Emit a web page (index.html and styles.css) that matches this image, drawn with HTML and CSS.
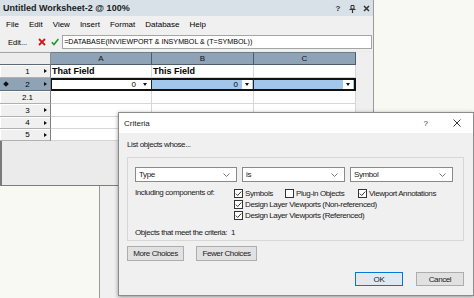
FILE: index.html
```html
<!DOCTYPE html>
<html>
<head>
<meta charset="utf-8">
<link rel="stylesheet" href="styles.css">
</head>
<body>
<div class="top">
  <div class="ws">
    <div class="ws-title">
      <span class="ws-name">Untitled Worksheet-2 @ 100%</span>
      <div class="ws-ctrls">
        <span class="ctl q">?</span>
        <span class="ctl"><svg width="7" height="9" viewBox="0 0 7 9"><path d="M2 1.5h3v3.5h-3z" fill="none" stroke="#333" stroke-width="1"/><path d="M0.5 5.5h6M3.5 5.5v3.5" stroke="#333" stroke-width="1.2"/></svg></span>
        <span class="ctl"><svg width="7" height="7" viewBox="0 0 7 7"><path d="M1 1L6 6M6 1L1 6" stroke="#333" stroke-width="1.5"/></svg></span>
      </div>
    </div>
    <div class="menubar">
      <span>File</span><span>Edit</span><span>View</span><span>Insert</span><span>Format</span><span>Database</span><span>Help</span>
    </div>
    <div class="fbar">
      <span class="edit">Edit...</span>
      <svg class="fx-cancel" width="8" height="8" viewBox="0 0 8 8"><path d="M1 1L7 7M7 1L1 7" stroke="#d01818" stroke-width="1.8"/></svg>
      <svg class="fx-ok" width="8" height="8" viewBox="0 0 8 8"><path d="M0.8 4.2L3 6.6L7.4 1" fill="none" stroke="#1f9a2c" stroke-width="1.6"/></svg>
      <div class="finput">=DATABASE(INVIEWPORT &amp; INSYMBOL &amp; (T=SYMBOL))</div>
    </div>
    <div class="sheet">
      <div class="corner"></div>
      <div class="ch">A</div>
      <div class="ch">B</div>
      <div class="ch">C</div>
      <div class="e"></div>

      <div class="rh"><i class="dia-slot"></i><span class="num">1</span><i class="arr"></i></div>
      <div class="c">That Field</div>
      <div class="c">This Field</div>
      <div class="c"></div>
      <div class="e"></div>

      <div class="rh sel"><i class="dia-slot"><b class="dia"></b></i><span class="num">2</span><i class="arr"></i></div>
      <div class="s sa"><span class="v">0</span><span class="dd"><i class="tri"></i></span></div>
      <div class="s sb"><span class="v">0</span><span class="dd"><i class="tri"></i></span></div>
      <div class="s sc"><span class="v"></span><span class="dd"><i class="tri"></i></span></div>
      <div class="e"></div>

      <div class="rh"><i class="dia-slot"></i><span class="num">2.1</span><i class="arr none"></i></div>
      <div class="c"></div>
      <div class="c"></div>
      <div class="c"></div>
      <div class="e"></div>

      <div class="rh"><i class="dia-slot"></i><span class="num">3</span><i class="arr"></i></div>
      <div class="c"></div>
      <div class="c"></div>
      <div class="c"></div>
      <div class="e"></div>

      <div class="rh"><i class="dia-slot"></i><span class="num">4</span><i class="arr"></i></div>
      <div class="c"></div>
      <div class="c"></div>
      <div class="c"></div>
      <div class="e"></div>

      <div class="rh"><i class="dia-slot"></i><span class="num">5</span><i class="arr"></i></div>
      <div class="c"></div>
      <div class="c"></div>
      <div class="c"></div>
      <div class="e"></div>

      <div class="filler"></div>
    </div>
  </div>
  <div class="side"></div>
</div>
<div class="bottom">
  <div class="bl"></div>
  <div class="br"></div>
</div>

<div class="dialog">
  <div class="dlg-title">
    <span>Criteria</span>
    <div class="dlg-ctrls">
      <span class="dq">?</span>
      <svg width="8" height="8" viewBox="0 0 8 8"><path d="M0.5 0.5L7.5 7.5M7.5 0.5L0.5 7.5" stroke="#222" stroke-width="0.9"/></svg>
    </div>
  </div>
  <div class="dlg-body">
    <div class="lead">List objects whose...</div>
    <div class="group">
      <div class="selects">
        <div class="select"><span>Type</span><svg width="7" height="4" viewBox="0 0 7 4"><path d="M0.5 0.5L3.5 3.5L6.5 0.5" fill="none" stroke="#666" stroke-width="0.9"/></svg></div>
        <div class="select"><span>is</span><svg width="7" height="4" viewBox="0 0 7 4"><path d="M0.5 0.5L3.5 3.5L6.5 0.5" fill="none" stroke="#666" stroke-width="0.9"/></svg></div>
        <div class="select"><span>Symbol</span><svg width="7" height="4" viewBox="0 0 7 4"><path d="M0.5 0.5L3.5 3.5L6.5 0.5" fill="none" stroke="#666" stroke-width="0.9"/></svg></div>
      </div>
      <div class="comp">
        <div class="comp-label">Including components of:</div>
        <div class="cb-row">
          <label class="cb w51"><svg class="box" viewBox="0 0 9 9"><rect x="0.5" y="0.5" width="8" height="8" fill="#fff" stroke="#333"/><path d="M1.8 4.6L3.7 6.5L7.3 2.5" fill="none" stroke="#222" stroke-width="0.9"/></svg>Symbols</label>
          <label class="cb w73"><svg class="box" viewBox="0 0 9 9"><rect x="0.5" y="0.5" width="8" height="8" fill="#fff" stroke="#333"/></svg>Plug-in Objects</label>
          <label class="cb"><svg class="box" viewBox="0 0 9 9"><rect x="0.5" y="0.5" width="8" height="8" fill="#fff" stroke="#333"/><path d="M1.8 4.6L3.7 6.5L7.3 2.5" fill="none" stroke="#222" stroke-width="0.9"/></svg>Viewport Annotations</label>
        </div>
        <div class="cb-row r2">
          <label class="cb"><svg class="box" viewBox="0 0 9 9"><rect x="0.5" y="0.5" width="8" height="8" fill="#fff" stroke="#333"/><path d="M1.8 4.6L3.7 6.5L7.3 2.5" fill="none" stroke="#222" stroke-width="0.9"/></svg>Design Layer Viewports (Non-referenced)</label>
        </div>
        <div class="cb-row r3">
          <label class="cb"><svg class="box" viewBox="0 0 9 9"><rect x="0.5" y="0.5" width="8" height="8" fill="#fff" stroke="#333"/><path d="M1.8 4.6L3.7 6.5L7.3 2.5" fill="none" stroke="#222" stroke-width="0.9"/></svg>Design Layer Viewports (Referenced)</label>
        </div>
      </div>
      <div class="count">Objects that meet the criteria:<span class="n">1</span></div>
    </div>
    <div class="more">
      <div class="btn w57">More Choices</div>
      <div class="btn w61">Fewer Choices</div>
    </div>
    <div class="okrow">
      <div class="btn ok">OK</div>
      <div class="btn cancel">Cancel</div>
    </div>
  </div>
</div>
</body>
</html>
```
FILE: styles.css
```css
* { box-sizing: border-box; margin: 0; padding: 0; }
html, body { width: 474px; height: 298px; overflow: hidden; }
body {
  position: relative;
  background: #f9f9f4;
  font-family: "Liberation Sans", Arial, sans-serif;
  color: #000;
  display: flex;
  flex-direction: column;
}

/* ---------- worksheet window ---------- */
.top { display: flex; height: 186px; flex: none; }
.ws {
  width: 374px;
  height: 186px;
  border-right: 1px solid #9a9a9a;
  border-bottom: 1px solid #7d7d7d;
  display: flex;
  flex-direction: column;
  background: #ebebeb;
}
.side { flex: 1; background: #f9f9f4; }

.ws-title {
  height: 16px;
  flex: none;
  background: #d8e0e8;
  display: flex;
  align-items: center;
  padding-left: 3px;
}
.ws-name { font-weight: bold; font-size: 9px; color: #1b1b1b; }
.ws-ctrls { margin-left: auto; display: flex; align-items: center; }
.ctl { width: 14px; display: flex; justify-content: center; align-items: center; }
.q { font-weight: bold; font-size: 8px; color: #333; }

.menubar {
  height: 17px;
  flex: none;
  background: #f0f0f0;
  display: flex;
  align-items: center;
  gap: 10px;
  padding-left: 6px;
  font-size: 8px;
}

.fbar {
  height: 18px;
  flex: none;
  background: #f0f0f0;
  display: flex;
  align-items: center;
  padding: 0 1px 0 8px;
}
.edit { font-size: 7.5px; }
.fx-cancel { margin-left: 11px; }
.fx-ok { margin-left: 5px; }
.finput {
  margin-left: 3px;
  flex: 1;
  height: 14px;
  background: #fff;
  border: 1px solid #a5a5a5;
  font-size: 7.15px;
  line-height: 12px;
  padding-left: 1px;
  white-space: nowrap;
  overflow: hidden;
}

.sheet {
  flex: 1;
  margin-top: 1px;
  display: grid;
  grid-template-columns: 51px 101px 102px 102px 1fr;
  grid-template-rows: 13px 13px 13px 13px 13px 12px 12px 1fr;
}
.corner {
  background: #ececec;
  border-right: 1px solid #8c8c8c;
  border-bottom: 1px solid #5a6a78;
  border-top: 1px solid #9aa6b0;
}
.ch {
  background: #8fa3b6;
  border-right: 1px solid #4e5d6b;
  border-bottom: 1px solid #4e5d6b;
  border-top: 1px solid #6e7f8e;
  font-size: 8px;
  line-height: 11px;
  text-align: center;
  color: #111;
}
.e { background: #efefef; }

.rh {
  background: #f0f0f0;
  border-right: 1px solid #7f7f7f;
  border-bottom: 1px solid #b0b0b0;
  box-shadow: inset 1px 1px 0 #fff;
  display: flex;
  align-items: center;
  font-size: 8px;
  padding-left: 4px;
}
.rh.sel { background: #8fa3b6; box-shadow: none; border-bottom-color: #5f6f7d; }
.dia-slot { width: 7px; height: 5px; display: flex; align-items: center; }
.dia { width: 4px; height: 4px; background: #111; transform: rotate(45deg); }
.num { flex: 1; text-align: center; }
.arr {
  width: 0; height: 0;
  margin-right: 3px;
  border-left: 3px solid #111;
  border-top: 2.5px solid transparent;
  border-bottom: 2.5px solid transparent;
}
.arr.none { border-left-color: transparent; }

.c {
  background: #fff;
  border-right: 1px solid #d6d6d6;
  border-bottom: 1px solid #d6d6d6;
  font-weight: bold;
  font-size: 9px;
  line-height: 12px;
  padding-left: 1px;
  white-space: nowrap;
}

.s {
  display: flex;
  align-items: center;
  justify-content: flex-end;
  border-top: 2px solid #111;
  border-bottom: 2px solid #111;
  border-right: 1px solid #222;
  background: #a2c7ea;
  font-size: 8px;
  padding-right: 1px;
}
.sa { background: #fff; border-left: 1px solid #111; }
.sc { border-right: 2px solid #111; }
.v { padding-right: 4px; }
.dd {
  width: 10px;
  height: 9px;
  background: #fff;
  display: flex;
  align-items: center;
  justify-content: center;
}
.tri {
  width: 0; height: 0;
  border-top: 3px solid #111;
  border-left: 2.5px solid transparent;
  border-right: 2.5px solid transparent;
}
.filler {
  grid-column: 1 / -1;
  background: #ebebeb;
  border-left: 2px solid #7a7a7a;
}

/* ---------- lower background ---------- */
.bottom { flex: 1; display: flex; }
.bl { width: 100px; background: #f9f9f4; border-right: 1px solid #9a9a9a; }
.br { flex: 1; background: #f0f0f0; }

/* ---------- dialog ---------- */
.dialog {
  position: absolute;
  left: 118px;
  top: 112px;
  width: 356px;
  height: 184px;
  border: 1px solid #8c8c8c;
  background: #f0f0f0;
  box-shadow: 0 1px 4px rgba(0, 0, 0, 0.4);
  display: flex;
  flex-direction: column;
  font-size: 8px;
  letter-spacing: -0.4px;
  color: #1a1a1a;
}
.dlg-title {
  height: 20px;
  background: #fff;
  display: flex;
  align-items: center;
  padding: 0 12px 0 5px;
  font-size: 8px;
  letter-spacing: 0;
}
.dlg-ctrls { margin-left: auto; display: flex; align-items: center; gap: 25px; }
.dq { color: #333; font-size: 8px; }

.dlg-body { padding: 0 9px 0 8px; display: flex; flex-direction: column; }
.lead { margin-top: 6px; height: 11px; line-height: 11px; }

.group {
  margin-top: 7px;
  height: 84px;
  border: 1px solid #d7d7d7;
  padding: 9px 0 0 7px;
}
.selects {
  display: grid;
  grid-template-columns: 102px 103px 103px;
  column-gap: 5px;
}
.select {
  height: 15px;
  background: #fff;
  border: 1px solid #8a8a8a;
  display: flex;
  align-items: center;
  justify-content: space-between;
  padding: 0 6px 0 3px;
}

.comp {
  margin-top: 5px;
  display: grid;
  grid-template-columns: 99px auto;
  grid-template-rows: 12px 11px 11px;
}
.comp-label { line-height: 12px; }
.cb-row { display: flex; align-items: center; }
.cb-row.r2, .cb-row.r3 { grid-column: 2; }
.cb { display: flex; align-items: center; white-space: nowrap; }
.box { width: 9px; height: 9px; margin-right: 2px; flex: none; }
.w51 { width: 51px; }
.w73 { width: 73px; }

.count { margin-top: 6px; line-height: 11px; }
.n { margin-left: 4px; }

.more { margin-top: 5px; display: flex; gap: 12px; }
.btn {
  height: 15px;
  background: #e1e1e1;
  border: 1px solid #adadad;
  display: flex;
  align-items: center;
  justify-content: center;
}
.w57 { width: 57px; }
.w61 { width: 61px; }
.okrow { margin-top: 11px; display: flex; justify-content: flex-end; gap: 13px; }
.ok, .cancel { width: 48px; height: 14px; }
.ok { border-color: #0078d7; background: #e3e8ee; }
```
